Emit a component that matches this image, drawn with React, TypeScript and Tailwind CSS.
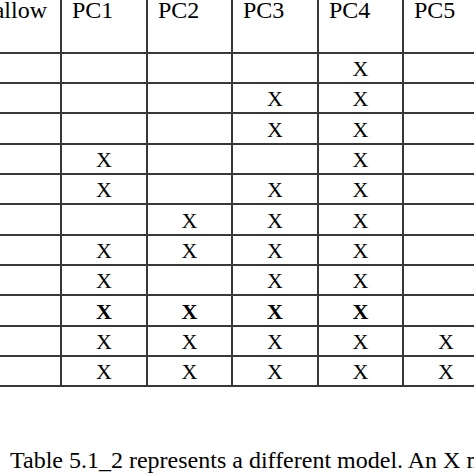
const cols = ["PC1", "PC2", "PC3", "PC4", "PC5"];

// 1 = X, 0 = empty, per row PC1..PC5
const rows: { marks: number[]; bold?: boolean; h: string }[] = [
  { marks: [0, 0, 0, 1, 0], h: "h-[28px]" },
  { marks: [0, 0, 1, 1, 0], h: "h-[28px]" },
  { marks: [0, 0, 1, 1, 0], h: "h-[29px]" },
  { marks: [1, 0, 0, 1, 0], h: "h-[28px]" },
  { marks: [1, 0, 1, 1, 0], h: "h-[28px]" },
  { marks: [0, 1, 1, 1, 0], h: "h-[29px]" },
  { marks: [1, 1, 1, 1, 0], h: "h-[28px]" },
  { marks: [1, 0, 1, 1, 0], h: "h-[28px]" },
  { marks: [1, 1, 1, 1, 0], bold: true, h: "h-[29px]" },
  { marks: [1, 1, 1, 1, 1], h: "h-[28px]" },
  { marks: [1, 1, 1, 1, 1], h: "h-[28px]" },
];

const widths = ["w-[84px]", "w-[83px]", "w-[84px]", "w-[83px]", "w-[84px]"];

export default function App() {
  return (
    <div
      className="w-[474px] h-[474px] overflow-hidden bg-white text-black"
      style={{ fontFamily: '"Liberation Serif", "Times New Roman", serif' }}
    >
      <div className="flex flex-col gap-y-[2px] bg-[#383838] w-[500px] border-b-2 border-[#383838]">
        {/* header */}
        <div className="flex gap-x-[2px] h-[52px]">
          <div className="w-[60px] bg-white flex justify-end overflow-hidden pr-[13px]">
            <span className="text-[24px] leading-[24px] -mt-[2px] whitespace-nowrap">Swallow</span>
          </div>
          {cols.map((c, i) => (
            <div key={c} className={`${widths[i]} bg-white pl-[10px]`}>
              <span className="block text-[24px] leading-[24px] -mt-[2px]">{c}</span>
            </div>
          ))}
        </div>
        {rows.map((r, ri) => (
          <div key={ri} className={`flex gap-x-[2px] ${r.h}`}>
            <div className="w-[60px] bg-white" />
            {r.marks.map((m, ci) => (
              <div
                key={ci}
                className={`${widths[ci]} bg-white flex items-center justify-center pt-[2px] text-[22px] leading-none ${
                  r.bold ? "font-bold" : ""
                }`}
              >
                {m ? "X" : ""}
              </div>
            ))}
          </div>
        ))}
      </div>
      <p className="mt-[61px] pl-[10px] text-[24px] leading-[24px] whitespace-nowrap">
        Table 5.1_2 represents a different model. An X marks a component
      </p>
    </div>
  );
}
